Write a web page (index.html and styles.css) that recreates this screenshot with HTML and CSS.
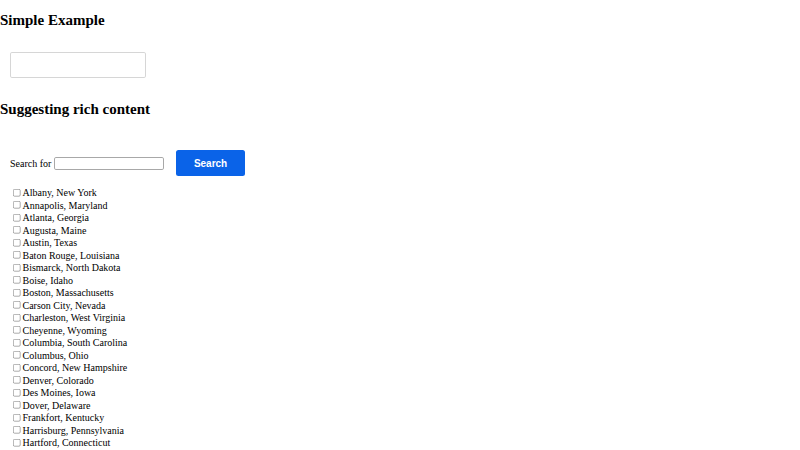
FILE: index.html
```html
<!DOCTYPE html>
<html lang="en">
<head>
<meta charset="utf-8">
<title>Suggestions</title>
<link rel="stylesheet" href="styles.css">
</head>
<body>
<h2 class="title">Simple Example</h2>
<div class="box">
  <input class="simple-input" type="text">
</div>
<h2 class="title">Suggesting rich content</h2>
<div class="search-row">
  <label class="search-label">Search for <input type="text" class="search-input"></label>
  <button class="search-btn" type="button">Search</button>
</div>
<div class="list">
  <div class="item"><label class="item-label"><input class="check" type="checkbox">Albany, New York</label></div>
  <div class="item"><label class="item-label"><input class="check" type="checkbox">Annapolis, Maryland</label></div>
  <div class="item"><label class="item-label"><input class="check" type="checkbox">Atlanta, Georgia</label></div>
  <div class="item"><label class="item-label"><input class="check" type="checkbox">Augusta, Maine</label></div>
  <div class="item"><label class="item-label"><input class="check" type="checkbox">Austin, Texas</label></div>
  <div class="item"><label class="item-label"><input class="check" type="checkbox">Baton Rouge, Louisiana</label></div>
  <div class="item"><label class="item-label"><input class="check" type="checkbox">Bismarck, North Dakota</label></div>
  <div class="item"><label class="item-label"><input class="check" type="checkbox">Boise, Idaho</label></div>
  <div class="item"><label class="item-label"><input class="check" type="checkbox">Boston, Massachusetts</label></div>
  <div class="item"><label class="item-label"><input class="check" type="checkbox">Carson City, Nevada</label></div>
  <div class="item"><label class="item-label"><input class="check" type="checkbox">Charleston, West Virginia</label></div>
  <div class="item"><label class="item-label"><input class="check" type="checkbox">Cheyenne, Wyoming</label></div>
  <div class="item"><label class="item-label"><input class="check" type="checkbox">Columbia, South Carolina</label></div>
  <div class="item"><label class="item-label"><input class="check" type="checkbox">Columbus, Ohio</label></div>
  <div class="item"><label class="item-label"><input class="check" type="checkbox">Concord, New Hampshire</label></div>
  <div class="item"><label class="item-label"><input class="check" type="checkbox">Denver, Colorado</label></div>
  <div class="item"><label class="item-label"><input class="check" type="checkbox">Des Moines, Iowa</label></div>
  <div class="item"><label class="item-label"><input class="check" type="checkbox">Dover, Delaware</label></div>
  <div class="item"><label class="item-label"><input class="check" type="checkbox">Frankfort, Kentucky</label></div>
  <div class="item"><label class="item-label"><input class="check" type="checkbox">Harrisburg, Pennsylvania</label></div>
  <div class="item"><label class="item-label"><input class="check" type="checkbox">Hartford, Connecticut</label></div>
</div>
</body>
</html>
```

FILE: styles.css
```css
html {
  zoom: 0.625;
}
body {
  margin: 0;
  font-family: "Liberation Serif", "Times New Roman", serif;
  font-size: 16px;
  color: #000;
  background: #fff;
}
.title {
  font-size: 24px;
  font-weight: bold;
  margin: 19.92px 0;
}
.box {
  padding: 16px;
}
.simple-input {
  width: 218px;
  height: 42px;
  box-sizing: border-box;
  border: 2px solid #d6d6d6;
  border-radius: 3px;
  padding: 10px;
  font-size: 16px;
  margin: 0;
}
.search-row {
  padding: 16px 16px 0;
}
.search-input {
  font-family: "Liberation Sans", Arial, sans-serif;
  font-size: 13.33px;
  width: 176px;
  height: 21px;
  box-sizing: border-box;
  border: 1px solid #a8a8a8;
  border-radius: 3px;
  padding: 1px 2px;
  margin: 0;
}
.search-btn {
  font-family: "Liberation Sans", Arial, sans-serif;
  font-size: 16px;
  font-weight: bold;
  color: #fff;
  background: #0a63e8;
  border: none;
  border-radius: 4px;
  padding: 12px 28px;
  margin: 16px;
}
.list {
  padding: 1px 16px 0;
}
.item {
  height: 20px;
}
.item-label {
  display: flex;
  align-items: center;
  height: 20px;
}
.check {
  width: 13px;
  height: 13px;
  margin: 3px 3px 3px 4px;
}
```
